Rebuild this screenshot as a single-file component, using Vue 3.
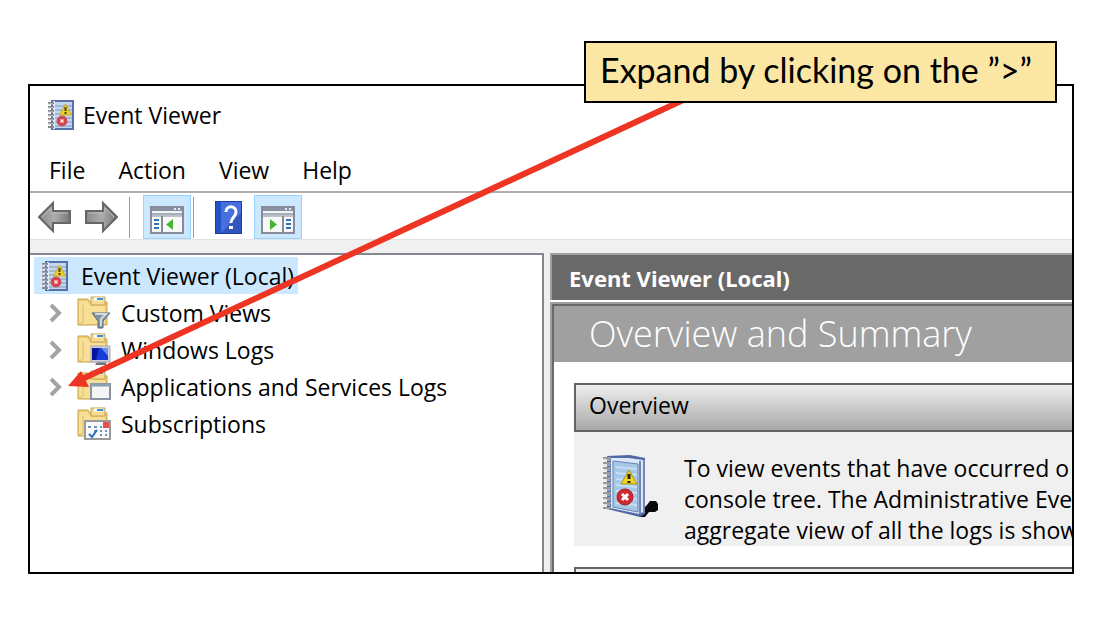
<template>
  <main class="page">
    <!-- shared icon shapes -->
    <svg class="defs" aria-hidden="true">
      <symbol id="book" viewBox="0 0 28 32">
        <rect x="4" y="1" width="23" height="30" fill="#5870a8" />
        <rect x="6" y="3" width="19" height="26" fill="#c3d8ee" />
        <path d="M8 7h17M8 11h17M8 15h17M8 19h17M8 23h17M8 27h17" stroke="#7f96bb" stroke-width="1" />
        <path d="M7 2v28" stroke="#dfe9f5" stroke-width="2" />
        <path d="M1 4h6M1 8h6M1 12h6M1 16h6M1 20h6M1 24h6M1 28h6" stroke="#888" stroke-width="2" />
        <path d="M1 5h5M1 9h5M1 13h5M1 17h5M1 21h5M1 25h5" stroke="#ccc" stroke-width="1" />
        <path d="M18.500 5l6 11h-12z" fill="#ecd02a" stroke="#c9ad2c" stroke-linejoin="round" />
        <path d="M18.500 8v4M18.500 13v2" stroke="#4a4420" stroke-width="2" />
        <circle cx="15" cy="22" r="5" fill="#d9434c" stroke="#c2545f" />
        <path d="M13.500 20.500l3 3M16.500 20.500l-3 3" stroke="#fbe4e4" stroke-width="1.500" />
      </symbol>
      <symbol id="folder" viewBox="0 0 34 34">
        <path d="M1 3h10l2 3h17v23H1z" fill="#eccb74" stroke="#cba650" />
        <path d="M14 1h14v8H14z" fill="#f5dc92" stroke="#c9a44d" />
        <path d="M17 3h9" stroke="#fff" stroke-width="3" />
        <path d="M20 3h6" stroke="#3593dd" stroke-width="2" />
        <path d="M2 5h8l4 5h14v18H2z" fill="#f8df97" />
        <path d="M2 28l4-2V9" fill="none" stroke="#dfbb66" />
      </symbol>
      <symbol id="pane" viewBox="0 0 34 28">
        <rect x="1" y="1" width="32" height="26" fill="#f8f8f8" stroke="#858b99" stroke-width="2" />
        <path d="M2 3.500h30" stroke="#8991a3" stroke-width="3" />
        <path d="M2 6h30" stroke="#e9edf3" stroke-width="1" />
        <path d="M2 8h30" stroke="#a8afbd" stroke-width="2" />
        <path d="M2 10h30" stroke="#858b99" stroke-width="1" />
        <path d="M24 3h2M28 3h2" stroke="#e8edf5" stroke-width="2" />
      </symbol>
    </svg>

    <section class="frame">
      <div class="window">
        <header class="titlebar">
          <svg class="book"><use href="#book" /></svg>
          <span>Event Viewer</span>
        </header>

        <nav class="menubar">
          <button v-for="item in menus" :key="item" type="button">{{ item }}</button>
        </nav>

        <div class="toolbar">
          <button type="button" aria-label="Back">
            <svg width="34" height="32" viewBox="0 0 34 32">
              <path d="M1 16L15 2v8h17v12H15v8z" fill="url(#metal)" stroke="#666" stroke-width="2" />
              <path d="M4 16l9-9v5h17" fill="none" stroke="#bbb" />
              <defs>
                <linearGradient id="metal">
                  <stop offset="0" stop-color="#8a8a8a" />
                  <stop offset="0.5" stop-color="#adadad" />
                  <stop offset="1" stop-color="#777" />
                </linearGradient>
              </defs>
            </svg>
          </button>
          <button type="button" aria-label="Forward">
            <svg width="34" height="32" viewBox="0 0 34 32">
              <path d="M33 16L19 2v8H2v12h17v8z" fill="url(#metal)" stroke="#666" stroke-width="2" />
              <path d="M4 12h17V7l9 9" fill="none" stroke="#bbb" />
            </svg>
          </button>
          <i class="separator"></i>
          <button type="button" class="active" aria-label="Show console tree">
            <svg width="34" height="28" viewBox="0 0 34 28">
              <use href="#pane" />
              <path d="M12 10v16" stroke="#858b99" stroke-width="2" />
              <path d="M4 14h5M4 18h5M4 22h5" stroke="#3274b8" stroke-width="2" />
              <path d="M23 13v11l-7-5.500z" fill="#47b52d" />
            </svg>
          </button>
          <i class="separator tight"></i>
          <button type="button" aria-label="Help">
            <svg width="27" height="33" viewBox="0 0 27 33">
              <rect width="27" height="33" fill="#1e3c9e" />
              <rect x="1" y="1" width="5" height="31" fill="#2450c8" />
              <rect x="6" y="1" width="20" height="31" fill="#4770dc" />
              <path d="M6 32L26 12v20z" fill="#3156bd" />
              <path d="M11 11c0-7 10-7 10 0 0 5-5 5-5 11" fill="none" stroke="#fff" stroke-width="3" />
              <path d="M14 25h4v3h-4z" fill="#fff" />
            </svg>
          </button>
          <button type="button" class="active" aria-label="Show action pane">
            <svg width="34" height="28" viewBox="0 0 34 28">
              <use href="#pane" />
              <path d="M22 10v16" stroke="#858b99" stroke-width="2" />
              <path d="M25 14h5M25 18h5M25 22h5" stroke="#3274b8" stroke-width="2" />
              <path d="M9 13v11l7-5.500z" fill="#47b52d" />
            </svg>
          </button>
        </div>

        <div class="content">
          <aside class="tree">
            <button type="button" class="root">
              <svg class="book"><use href="#book" /></svg>
              <span>Event Viewer (Local)</span>
            </button>
            <ul>
              <li v-for="node in nodes" :key="node.icon">
                <button type="button" class="node">
                  <span class="chevron">
                    <svg v-if="node.expandable" width="14" height="20" viewBox="0 0 14 20">
                      <path d="M3 2l8 8-8 8" fill="none" stroke="#a3a3a3" stroke-width="4" />
                    </svg>
                  </span>
                  <svg width="34" height="34" viewBox="0 0 34 34">
                    <use href="#folder" />
                    <g v-if="node.icon === 'filter'">
                      <path d="M15 17h18l-7 8v7h-5v-7z" fill="#83949f" stroke="#596b78" />
                      <path d="M18 18h11l-5 5v7" fill="none" stroke="#cbdce5" stroke-width="2" />
                    </g>
                    <g v-else-if="node.icon === 'monitor'">
                      <path d="M20 29h9v3H18z" fill="#777" />
                      <rect x="14" y="13" width="19" height="16" fill="#c9ced8" stroke="#a5abb5" />
                      <rect x="15" y="15" width="16" height="12" fill="#173bd8" />
                      <path d="M15 15h7l-3 12h-4z" fill="#0713a1" />
                      <path d="M24 15h7v8z" fill="#688eee" />
                    </g>
                    <g v-else-if="node.icon === 'app'">
                      <rect x="14" y="14" width="19" height="15" fill="#f4f4f4" stroke="#8993a2" stroke-width="2" />
                      <path d="M14 15h19" stroke="#8ca0b5" stroke-width="3" />
                    </g>
                    <g v-else>
                      <rect x="8" y="14" width="25" height="18" fill="#fafafa" stroke="#9a9a9a" stroke-width="2" />
                      <path d="M26 15h6v6h-6z" fill="#e5504f" />
                      <path d="M11 20h3M17 20h3M23 20h2M17 24h3M23 24h2M28 24h2M23 28h2M28 28h2" stroke="#6a92bb" stroke-width="2" />
                      <path d="M12 27l3 3 5-7" fill="none" stroke="#2472bd" stroke-width="2" />
                    </g>
                  </svg>
                  <span>{{ node.label }}</span>
                </button>
              </li>
            </ul>
          </aside>

          <section class="details">
            <h1>Event Viewer (Local)</h1>
            <div class="summary">
              <h2>Overview and Summary</h2>
              <div class="groups">
                <article>
                  <h3>Overview</h3>
                  <div class="overview">
                    <svg width="58" height="66" viewBox="0 0 58 66">
                      <path d="M40 57l5-5 3-4h6l2 3v6l-3 2h-6l-4 5h-6z" fill="#080808" />
                      <path d="M5 3l23-1 15 3v56l-5 3-33-8z" fill="#5269a7" />
                      <path d="M8 5h19l14 2v52l-4 2-29-6z" fill="#dce8f8" />
                      <path d="M11 8l25 3v48l-25-5z" fill="#a6c8e6" stroke="#6680b5" />
                      <path d="M14 14l21 2M14 20l21 2M14 26l21 2M14 32l21 2M14 38l21 2M14 44l21 2M14 50l21 2" stroke="#c6def2" stroke-width="2" />
                      <path d="M38 8v53M42 7v53" stroke="#7486b8" stroke-width="2" />
                      <path d="M8 4v51" stroke="#647aae" stroke-width="2" />
                      <path d="M1 5h8M1 10h8M1 15h8M1 20h8M1 25h8M1 30h8M1 35h8M1 40h8M1 45h8M1 50h8M1 55h8" stroke="#999" stroke-width="2" />
                      <path d="M2 7h6M2 12h6M2 17h6M2 22h6M2 27h6M2 32h6M2 37h6M2 42h6M2 47h6M2 52h6" stroke="#d5d5d5" />
                      <path d="M27 17l8 14H19z" fill="#f2d621" stroke="#ae930c" stroke-linejoin="round" />
                      <path d="M27 21v5M27 28v2" stroke="#222" stroke-width="3" />
                      <circle cx="23" cy="44" r="8" fill="#cf2930" stroke="#a91f2b" />
                      <path d="M20 41l6 6M26 41l-6 6" stroke="#fff" stroke-width="3" />
                    </svg>
                    <p>
                      <span v-for="line in overview" :key="line">{{ line }}</span>
                    </p>
                  </div>
                </article>
                <div class="next-group"></div>
              </div>
            </div>
          </section>
        </div>
      </div>

      <!-- annotation over the window -->
      <svg class="arrow" width="680" height="310" viewBox="0 0 680 310" aria-hidden="true">
        <path d="M50 294L664 9" stroke="#ee3524" stroke-width="6" />
        <path d="M38 300l13-15 8 16z" fill="#ee3524" />
      </svg>
      <div class="callout">Expand by clicking on the ”&gt;”</div>
    </section>
  </main>
</template>

<script setup>
const menus = ['File', 'Action', 'View', 'Help']

const nodes = [
  { label: 'Custom Views', icon: 'filter', expandable: true },
  { label: 'Windows Logs', icon: 'monitor', expandable: true },
  { label: 'Applications and Services Logs', icon: 'app', expandable: true },
  { label: 'Subscriptions', icon: 'calendar', expandable: false }
]

const overview = [
  'To view events that have occurred o',
  'console tree. The Administrative Eve',
  'aggregate view of all the logs is show'
]
</script>

<style>
body {
  background: #fff;
}
</style>

<style scoped>
.page {
  padding: 84px 32px 44px 28px;
  font-family: 'Open Sans', 'Noto Sans', sans-serif;
  font-size: 23px;
  color: #000;
}

.defs {
  position: absolute;
  width: 0;
  height: 0;
}

button {
  display: flex;
  align-items: center;
  padding: 0;
  border: 0;
  background: none;
  font: inherit;
  color: inherit;
}

svg {
  display: block;
  flex: none;
}

.frame {
  position: relative;
  border: 2px solid #000;
}

.window {
  overflow: hidden;
}

.book {
  width: 28px;
  height: 32px;
}

.titlebar {
  display: flex;
  align-items: center;
  gap: 8px;
  height: 58px;
  padding-left: 17px;
}

.menubar {
  display: flex;
  gap: 33px;
  height: 47px;
  padding-left: 19px;
  border-bottom: 2px solid #b0b0b0;
}

.menubar button {
  height: 52px;
}

.toolbar {
  display: flex;
  align-items: center;
  box-sizing: border-box;
  height: 47px;
  padding: 2px 0 0 8px;
  border-bottom: 1px solid #e3e3e3;
}

.toolbar button + button {
  margin-left: 12px;
}

.toolbar .active {
  justify-content: center;
  box-sizing: border-box;
  width: 48px;
  height: 44px;
  padding-top: 6px;
  border: 1px solid #99d1ff;
  background: #cce8ff;
}

.separator {
  width: 1px;
  height: 41px;
  margin: 0 13px 0 11px;
  background: #999;
}

.separator.tight {
  margin: 0 21px 0 2px;
}

.content {
  display: flex;
  gap: 6px;
  padding-top: 13px;
  background: #f0f0f0;
}

.tree {
  box-sizing: border-box;
  flex: 0 0 514px;
  padding: 2px 0 0 4px;
  border-top: 2px solid #828790;
  border-right: 2px solid #828790;
  background: #fff;
}

.root {
  gap: 12px;
  height: 37px;
  padding: 0 4px 0 7px;
  background: #cce8ff;
}

.tree ul {
  margin: 0;
  padding: 0;
  list-style: none;
}

.node {
  height: 37px;
  padding-left: 14px;
}

.chevron {
  width: 29px;
}

.node > span:last-child {
  margin-left: 10px;
}

.details {
  flex: 1;
  min-width: 0;
  background: #fff;
}

h1,
h2,
h3,
p {
  margin: 0;
}

h1 {
  height: 45px;
  padding-left: 17px;
  border-top: 2px solid #a0a0a0;
  border-left: 2px solid #a0a0a0;
  background: #696969;
  color: #fff;
  font-family: 'Noto Sans', sans-serif;
  font-size: 22px;
  line-height: 47px;
}

.summary {
  margin-top: 2px;
  border-top: 2px solid #a0a0a0;
  border-left: 2px solid #a0a0a0;
}

h2 {
  height: 56px;
  padding-left: 35px;
  border-top: 2px solid #696969;
  border-left: 2px solid #696969;
  background: #a0a0a0;
  color: #fff;
  font-size: 36px;
  font-weight: 300;
  line-height: 56px;
}

.groups {
  padding: 21px 0 0 20px;
  border-left: 2px solid #696969;
}

h3 {
  height: 45px;
  padding-left: 13px;
  border: 2px solid #646464;
  border-right: 0;
  background: linear-gradient(#eee, #a8a8a8);
  font-size: 23px;
  font-weight: 400;
  line-height: 40px;
}

.overview {
  display: flex;
  gap: 24px;
  padding: 21px 0 0 28px;
  background: #f0f0f0;
}

.overview p {
  line-height: 31px;
}

.overview span {
  display: block;
  white-space: nowrap;
}

.next-group {
  height: 3px;
  margin-top: 21px;
  border-top: 2px solid #646464;
  border-left: 2px solid #646464;
  background: #eee;
}

.arrow {
  position: absolute;
  top: 0;
  left: 0;
}

.callout {
  position: absolute;
  top: -45px;
  left: 554px;
  padding: 0 23px 4px 14px;
  border: 2px solid #000;
  background: #fce6a4;
  color: #000;
  font-family: Lato, sans-serif;
  font-size: 34px;
  line-height: 54px;
  white-space: nowrap;
}
</style>
